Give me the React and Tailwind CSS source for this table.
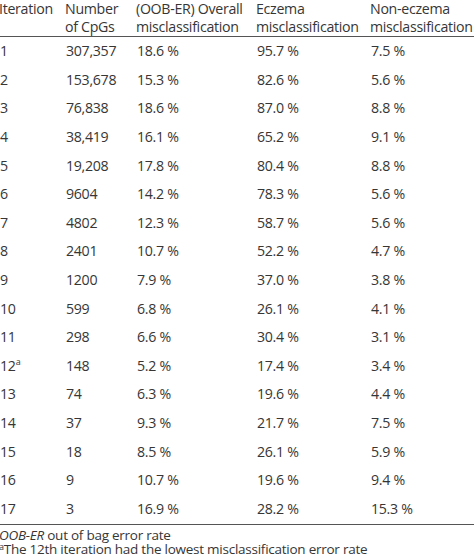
import React from "react";

const rows = [
  ["1", "307,357", "18.6 %", "95.7 %", "7.5 %"],
  ["2", "153,678", "15.3 %", "82.6 %", "5.6 %"],
  ["3", "76,838", "18.6 %", "87.0 %", "8.8 %"],
  ["4", "38,419", "16.1 %", "65.2 %", "9.1 %"],
  ["5", "19,208", "17.8 %", "80.4 %", "8.8 %"],
  ["6", "9604", "14.2 %", "78.3 %", "5.6 %"],
  ["7", "4802", "12.3 %", "58.7 %", "5.6 %"],
  ["8", "2401", "10.7 %", "52.2 %", "4.7 %"],
  ["9", "1200", "7.9 %", "37.0 %", "3.8 %"],
  ["10", "599", "6.8 %", "26.1 %", "4.1 %"],
  ["11", "298", "6.6 %", "30.4 %", "3.1 %"],
  ["12", "148", "5.2 %", "17.4 %", "3.4 %", true],
  ["13", "74", "6.3 %", "19.6 %", "4.4 %"],
  ["14", "37", "9.3 %", "21.7 %", "7.5 %"],
  ["15", "18", "8.5 %", "26.1 %", "5.9 %"],
  ["16", "9", "10.7 %", "19.6 %", "9.4 %"],
  ["17", "3", "16.9 %", "28.2 %", "15.3 %"],
];

const grid = "grid grid-cols-[66px_71px_120px_114px_1fr] whitespace-nowrap";

export default function App() {
  return (
    <div
      className="w-[474px] h-[557px] overflow-hidden bg-white text-[#363636] text-[14.2px] tracking-[-0.3px]"
      style={{ fontFamily: '"Open Sans", "Noto Sans", sans-serif' }}
    >
      <div className={`${grid} leading-[18px] h-[37px] border-b border-[#555555] -ml-[1px]`}>
        <div>Iteration</div>
        <div>Number<br />of CpGs</div>
        <div>(OOB-ER) Overall<br />misclassification</div>
        <div>Eczema<br />misclassification</div>
        <div>Non-eczema<br />misclassification</div>
      </div>
      <div className="border-b border-[#555555] pb-[1px]">
        {rows.map((r) => (
          <div key={r[0]} className={`${grid} h-[28.6px] items-center leading-[18px]`}>
            <div>
              {r[0]}
              {r[5] && (
                <span className="relative -top-[6px] text-[9px] leading-none">a</span>
              )}
            </div>
            <div>{r[1]}</div>
            <div>{r[2]}</div>
            <div>{r[3]}</div>
            <div>{r[4]}</div>
          </div>
        ))}
      </div>
      <div className="text-[13.5px] leading-[14px] pt-[3px] -ml-[1px] whitespace-nowrap tracking-[-0.25px]">
        <div><i>OOB-ER</i> out of bag error rate</div>
        <div>
          <span className="relative -top-[4px] text-[9px] leading-none">a</span>The 12th iteration had the lowest misclassification error rate
        </div>
      </div>
    </div>
  );
}
